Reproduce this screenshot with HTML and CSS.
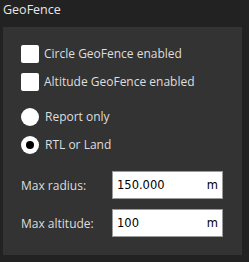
FILE: index.html
```html
<!DOCTYPE html>
<html lang="en">
<head>
  <meta charset="UTF-8" />
  <title>GeoFence</title>
  <link rel="stylesheet" href="styles.css">
</head>
<body>

<h2 class="title">GeoFence</h2>

<div class="panel">
  <label class="check">
    <span class="box"></span>
    Circle GeoFence enabled
  </label>
  <label class="check">
    <span class="box"></span>
    Altitude GeoFence enabled
  </label>

  <div class="radios">
    <label class="radio">
      <span class="dot"></span>
      Report only
    </label>
    <label class="radio checked">
      <span class="dot"></span>
      RTL or Land
    </label>
  </div>

  <div class="fields">
    <div class="field">
      <span class="field-label">Max radius:</span>
      <div class="input"><span>150.000</span><span>m</span></div>
    </div>
    <div class="field">
      <span class="field-label">Max altitude:</span>
      <div class="input"><span>100</span><span>m</span></div>
    </div>
  </div>
</div>

</body>
</html>
```

FILE: styles.css
```css
* {
  box-sizing: border-box;
}

body {
  margin: 0;
  background: #222222;
  color: #dedede;
  font-family: 'Open Sans', 'DejaVu Sans', sans-serif;
  font-size: 12px;
}

.title {
  margin: 0;
  padding: 0 3px;
  height: 27px;
  line-height: 20px;
  font-size: 12.5px;
  font-weight: normal;
  color: #e6e6e6;
}

.panel {
  margin-left: 3px;
  width: 239px;
  height: 228px;
  background: #333333;
  padding: 17px 0 0 18px;
}

.check, .radio {
  display: flex;
  align-items: center;
  gap: 5px;
  height: 19px;
}

.check + .check {
  margin-top: 9px;
}

.box {
  width: 18px;
  height: 18px;
  background: #ffffff;
  border-radius: 2px;
}

.radios {
  margin-top: 16px;
  display: flex;
  flex-direction: column;
  gap: 9px;
}

.dot {
  width: 18px;
  height: 18px;
  border-radius: 50%;
  background: #ffffff;
  display: flex;
  align-items: center;
  justify-content: center;
  margin-right: 1px;
}

.radio.checked .dot::after {
  content: "";
  width: 8px;
  height: 8px;
  border-radius: 50%;
  background: #000000;
}

.fields {
  margin-top: 17px;
  display: flex;
  flex-direction: column;
  gap: 10px;
}

.field {
  display: flex;
  align-items: center;
}

.field-label {
  width: 91px;
}

.input {
  width: 111px;
  height: 28px;
  background: #ffffff;
  border: 1px solid #9a9a9a;
  color: #000000;
  font-family: 'DejaVu Sans', sans-serif;
  font-size: 11.5px;
  display: flex;
  align-items: center;
  justify-content: space-between;
  padding: 0 4px 0 4px;
}
```
